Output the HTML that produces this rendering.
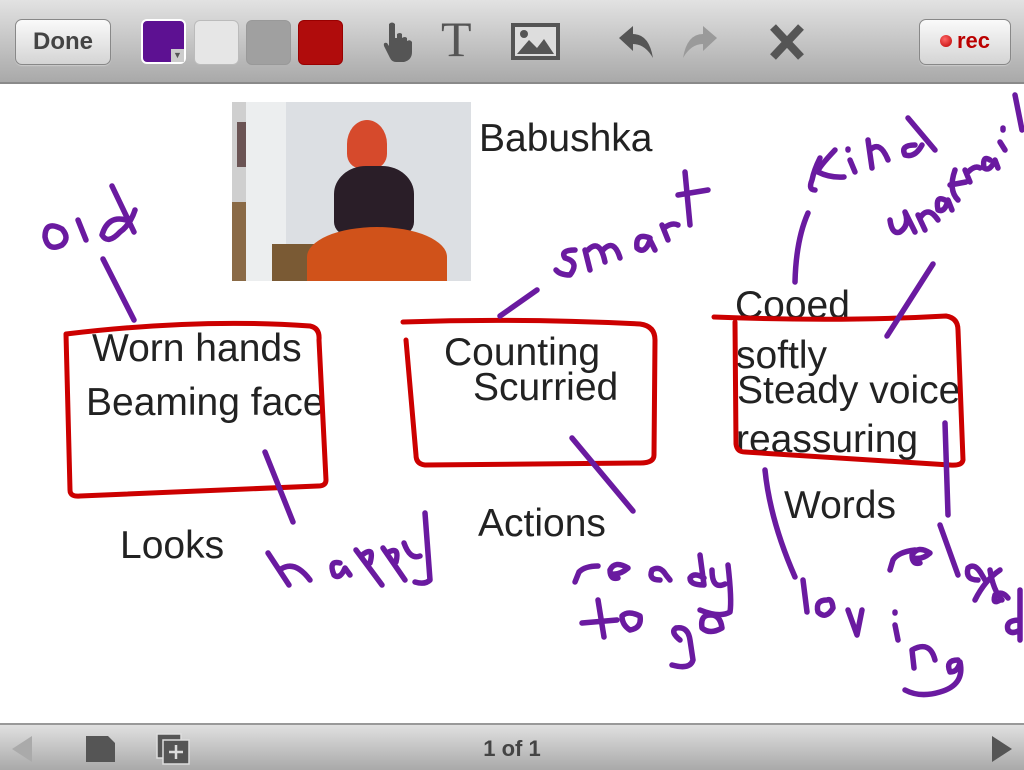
<!DOCTYPE html>
<html><head><meta charset="utf-8"><style>
html,body{margin:0;padding:0;width:1024px;height:768px;overflow:hidden;background:#fff;font-family:"Liberation Sans",sans-serif}
.top{position:absolute;left:0;top:0;width:1024px;height:82px;background:linear-gradient(#e2e2e2,#a9a9a9);border-bottom:2px solid #8a8a8a}
.bot{position:absolute;left:0;top:723px;width:1024px;height:45px;background:linear-gradient(#e0e0e0,#a9a9a9);border-top:2px solid #999}
.btn{position:absolute;border:1px solid #888;border-radius:7px;background:linear-gradient(#fafafa,#d4d4d4);font-weight:bold;font-size:24px;text-align:center;box-shadow:0 1px 1px #ccc}
.sw{position:absolute;top:20px;width:43px;height:43px;border-radius:6px}
.t{position:absolute;font-size:39px;color:#222;white-space:nowrap;line-height:1}
</style></head><body>
<div class="top">
 <div class="btn" style="left:15px;top:19px;width:94px;height:44px;line-height:44px;color:#444">Done</div>
 <div class="sw" style="left:141px;background:#5d1192;border:2px solid #fff;width:41px;height:41px;top:19px"><div style="position:absolute;right:0;bottom:0;width:13px;height:13px;background:#ccc;font-size:9px;color:#555;text-align:center;line-height:13px">▼</div></div>
 <div class="sw" style="left:194px;background:#e6e6e6;border:1px solid #bbb"></div>
 <div class="sw" style="left:246px;background:#a0a0a0;border:1px solid #999"></div>
 <div class="sw" style="left:298px;background:#b00c0c;border:1px solid #900"></div>
 <svg style="position:absolute;left:380px;top:20px" width="40" height="42" viewBox="0 0 40 42"><path d="M9 4 q3-3 6 0 v14 l2 0 v-4 q3-2 5 0 v4 q3-2 5 0 v3 q3-2 5 1 v10 q0 8-8 10 h-8 q-4 0-6-4 l-6-12 q-1-4 3-3 l2 3 z" fill="#555"/></svg>
 <div style="position:absolute;left:441px;top:14px;font-family:'Liberation Serif',serif;font-size:50px;color:#555;line-height:1">T</div>
 <svg style="position:absolute;left:511px;top:23px" width="49" height="37" viewBox="0 0 49 37"><rect x="2" y="2" width="45" height="33" fill="#ddd" stroke="#555" stroke-width="4"/><path d="M6 31 l12-14 8 8 7-9 10 15z" fill="#555"/><circle cx="13" cy="11" r="4" fill="#555"/></svg>
 <svg style="position:absolute;left:617px;top:24px" width="40" height="36" viewBox="0 0 40 36"><path d="M2 14 L16 2 V10 Q32 10 36 34 Q28 20 16 20 V27 Z" fill="#555"/></svg>
 <svg style="position:absolute;left:679px;top:24px" width="40" height="36" viewBox="0 0 40 36"><path d="M38 14 L24 2 V10 Q8 10 4 34 Q12 20 24 20 V27 Z" fill="#9a9a9a"/></svg>
 <svg style="position:absolute;left:768px;top:24px" width="38" height="36" viewBox="0 0 38 36"><path d="M5 3 L33 33 M33 3 L5 33" stroke="#555" stroke-width="8"/></svg>
 <div class="btn" style="left:919px;top:19px;width:90px;height:44px;line-height:42px;color:#b00;font-size:22px"><span style="display:inline-block;width:12px;height:12px;border-radius:50%;background:radial-gradient(circle at 40% 35%,#f66,#b00);vertical-align:1px;margin-right:5px"></span>rec</div>
</div>

<div style="position:absolute;left:232px;top:102px;width:239px;height:179px;background:#dcdfe3;overflow:hidden">
 <div style="position:absolute;left:0;top:0;width:30px;height:179px;background:#cfcfcf"></div>
 <div style="position:absolute;left:5px;top:20px;width:20px;height:45px;background:#6b5454"></div>
 <div style="position:absolute;left:0;top:100px;width:30px;height:79px;background:#8a6a46"></div>
 <div style="position:absolute;left:14px;top:0;width:40px;height:179px;background:#eceeef"></div>
 <div style="position:absolute;left:40px;top:142px;width:70px;height:37px;background:#7a5a34"></div>
 <div style="position:absolute;left:115px;top:18px;width:40px;height:48px;border-radius:50% 50% 30% 30%;background:#d64a2c"></div>
 <div style="position:absolute;left:102px;top:64px;width:80px;height:70px;border-radius:40% 40% 20% 20%;background:#2a1e28"></div>
 <div style="position:absolute;left:75px;top:125px;width:140px;height:60px;border-radius:50% 50% 0 0;background:#d0521a"></div>
</div>

<div class="t" style="left:479px;top:119px">Babushka</div>
<div class="t" style="left:92px;top:329px">Worn hands</div>
<div class="t" style="left:86px;top:383px">Beaming face</div>
<div class="t" style="left:120px;top:526px">Looks</div>
<div class="t" style="left:444px;top:333px">Counting</div>
<div class="t" style="left:473px;top:368px">Scurried</div>
<div class="t" style="left:478px;top:504px">Actions</div>
<div class="t" style="left:735px;top:286px">Cooed</div>
<div class="t" style="left:736px;top:336px">softly</div>
<div class="t" style="left:737px;top:371px">Steady voice</div>
<div class="t" style="left:736px;top:420px">reassuring</div>
<div class="t" style="left:784px;top:486px">Words</div>

<svg style="position:absolute;left:0;top:0" width="1024" height="768" fill="none" stroke-linecap="round" stroke-linejoin="round">
 <g stroke="#c00" stroke-width="5">
  <path d="M66 334 Q200 318 310 326 Q320 328 319 340 L326 480 Q326 486 318 486 L80 496 Q70 497 70 490 L66 334"/>
  <path d="M403 322 Q520 318 640 324 Q655 326 655 340 L654 455 Q654 463 640 463 L425 465 Q416 464 416 455 L406 340"/>
  <path d="M714 317 Q840 322 946 316 Q958 318 958 330 L963 460 Q962 466 950 465 L745 452 Q737 452 736 444 L735 322"/>
 </g>
 <g stroke="#6a1aa0" stroke-width="5.5">
  <path d="M103 259 L134 320"/><path d="M265 452 L293 522"/><path d="M500 316 L537 290"/><path d="M572 438 L633 511"/>
  <path d="M808 213 Q796 240 795 282"/><path d="M933 264 L887 336"/><path d="M765 470 Q770 520 795 577"/><path d="M945 423 L948 515"/>
  <path d="M62 229 Q45 220 45 237 Q48 252 62 245 Q70 238 62 229"/><path d="M78 220 L86 240"/><path d="M126 220 Q108 215 102 235 Q108 245 120 232 Q130 225 135 210 M112 186 L134 232"/>
  <path d="M268 553 L289 585 M281 569 Q295 560 310 580"/><path d="M340 563 Q328 560 334 575 Q340 580 345 568 L350 575"/><path d="M356 550 L382 585 M362 555 Q375 545 370 563"/><path d="M383 548 L405 580 M387 553 Q400 545 396 562"/><path d="M404 543 Q410 560 420 556 M425 513 L430 580 Q425 585 415 582"/>
  <path d="M575 250 Q560 250 565 258 Q580 262 570 275 Q560 275 556 270"/><path d="M585 250 L590 270 M588 250 Q600 238 605 262 M603 250 Q614 238 620 258"/><path d="M650 238 Q635 232 637 248 Q645 255 650 240 L655 250"/><path d="M662 225 L668 240 M664 228 Q672 222 678 225"/><path d="M685 172 L690 225 M678 195 L708 190"/>
  <path d="M812 180 Q808 190 815 190 M820 158 Q814 170 812 180 M835 150 Q818 168 818 172 Q830 178 844 177"/><path d="M850 160 L855 172 M848 149 L848 150"/><path d="M868 140 L872 168 M870 150 Q880 140 888 160"/><path d="M915 145 Q900 145 905 155 Q915 158 922 145 M908 118 L935 150"/>
  <path d="M890 220 Q892 235 900 232 Q910 225 905 212 L915 232"/><path d="M918 215 L925 230 M920 218 Q928 205 938 220"/><path d="M945 200 Q935 195 938 210 Q945 213 948 200 L952 210"/><path d="M955 170 Q948 190 958 200 M950 185 L966 182"/><path d="M965 170 L970 182 M968 172 Q975 165 980 168"/><path d="M990 160 Q982 155 984 168 Q990 172 995 160 L998 168"/><path d="M1000 142 L1005 150 M1003 128 L1003 130"/><path d="M1015 95 L1022 130"/>
  <path d="M575 582 L579 572 Q585 566 598 566"/><path d="M618 578 Q610 580 610 570 Q615 560 628 568 Q620 575 612 574"/><path d="M660 580 Q648 580 652 570 Q660 565 666 575 L670 580"/><path d="M700 555 L704 585 Q690 585 690 578 Q694 572 704 578"/><path d="M712 570 Q712 590 725 584 M728 565 Q732 600 730 612 Q720 618 700 610"/>
  <path d="M582 623 L617 620 M598 600 L604 637"/><path d="M622 616 Q628 610 640 616 Q642 628 630 630 Q622 625 622 616"/><path d="M680 640 Q670 632 676 628 Q688 626 690 640 L693 660 Q690 670 672 665"/><path d="M710 615 Q700 615 702 628 Q710 635 722 628 Q720 614 710 615 Z"/>
  <path d="M803 580 L807 612"/><path d="M827 600 Q815 600 818 612 Q826 620 833 608 Q832 598 827 600"/><path d="M848 610 L857 635 L862 610"/><path d="M895 625 L898 640 M895 612 L895 613"/><path d="M912 650 L914 668 M912 650 Q930 640 935 660"/><path d="M958 660 Q945 660 950 672 Q958 672 960 662 Q965 685 940 692 Q920 698 905 690"/>
  <path d="M890 570 L893 560 Q898 552 915 550"/><path d="M920 563 Q912 565 912 555 Q918 545 930 553 Q922 560 914 558"/><path d="M940 525 L958 575"/><path d="M978 580 Q965 580 968 568 Q975 562 982 575 L985 580"/><path d="M975 600 Q985 580 1000 570 M990 570 Q993 590 1002 600"/><path d="M1000 600 Q992 605 995 595 Q1002 590 1008 598"/><path d="M1020 590 L1020 640 M1020 620 Q1005 620 1008 630 Q1012 635 1020 630"/>
 </g>
</svg>

<div class="bot">
 <svg style="position:absolute;left:10px;top:11px" width="24" height="26"><path d="M22 0 L2 13 L22 26Z" fill="#aaa"/></svg>
 <svg style="position:absolute;left:84px;top:9px" width="34" height="30"><path d="M2 2 H24 L31 9 V28 H2Z" fill="#555"/></svg>
 <svg style="position:absolute;left:156px;top:8px" width="36" height="32"><rect x="1" y="1" width="24" height="24" fill="#555" stroke="#ddd" stroke-width="1.5"/><rect x="7" y="7" width="26" height="24" fill="#555" stroke="#ddd" stroke-width="1.5"/><path d="M20 12 V26 M13 19 H27" stroke="#ddd" stroke-width="2.5"/></svg>
 <div style="position:absolute;left:0;width:1024px;top:11px;text-align:center;font-size:22px;font-weight:bold;color:#444">1 of 1</div>
 <svg style="position:absolute;left:990px;top:11px" width="24" height="26"><path d="M2 0 L22 13 L2 26Z" fill="#555"/></svg>
</div>
</body></html>
